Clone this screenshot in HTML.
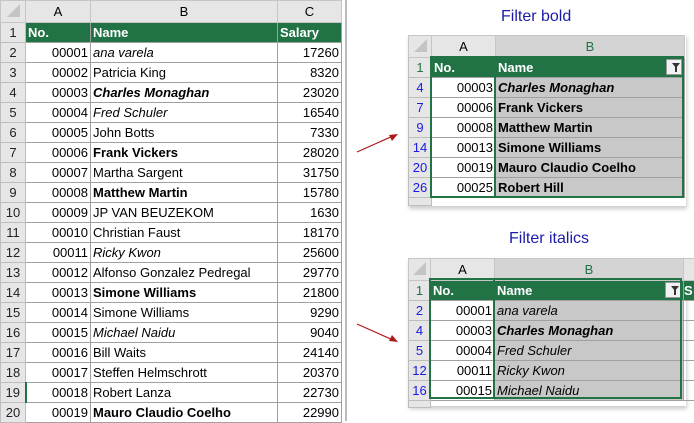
<!DOCTYPE html>
<html><head><meta charset="utf-8"><style>
*{margin:0;padding:0;box-sizing:border-box}
body{width:694px;height:421px;background:#fff;position:relative;overflow:hidden;font-family:"Liberation Sans",sans-serif;font-size:13px;color:#000}
table{border-collapse:collapse;table-layout:fixed;position:absolute}
td{border:1px solid #a0a0a0;height:20px;padding:0 2px;white-space:nowrap;overflow:hidden;line-height:18px}
td.h{background:#e6e6e6;text-align:center;border-color:#bdbdbd;color:#222}
tr.top td{height:20px;background:#e6e6e6;text-align:center;border-color:#c6c6c6}
tr.g td:not(.h){background:#217346;color:#fff;font-weight:bold}
td.r{text-align:right}
.b{font-weight:bold}.i{font-style:italic}
.bl{color:#1a1ae0 !important}
.sel{background:#c8c8c8}
.t{position:absolute;color:#1c1ca8;font-size:16px}
.box{position:absolute;border:2px solid #217346}
.corner{width:0;height:0;border-left:13px solid transparent;border-bottom:13px solid #c4c4c4;display:inline-block;margin-top:3px}
.fb{position:absolute;width:16px;height:16px;background:#f2f2f2;border:1px solid #999}
.fb:after{content:"";position:absolute;left:5px;top:3px;border-left:4px solid transparent;border-right:4px solid transparent;border-top:5px solid #333}
.fb:before{content:"";position:absolute;left:8px;top:7px;width:2px;height:5px;background:#333}
</style></head><body>

<table style="left:0;top:0;width:341px">
<colgroup><col style="width:25px"><col style="width:65px"><col style="width:187px"><col style="width:64px"></colgroup>
<tr class="top"><td><span class="corner"></span></td><td>A</td><td>B</td><td>C</td></tr>
<tr class="g"><td class="h">1</td><td>No.</td><td>Name</td><td>Salary</td></tr>
<tr><td class="h">2</td><td class="r">00001</td><td class="i">ana varela</td><td class="r">17260</td></tr>
<tr><td class="h">3</td><td class="r">00002</td><td>Patricia King</td><td class="r">8320</td></tr>
<tr><td class="h">4</td><td class="r">00003</td><td class="b i">Charles Monaghan</td><td class="r">23020</td></tr>
<tr><td class="h">5</td><td class="r">00004</td><td class="i">Fred Schuler</td><td class="r">16540</td></tr>
<tr><td class="h">6</td><td class="r">00005</td><td>John Botts</td><td class="r">7330</td></tr>
<tr><td class="h">7</td><td class="r">00006</td><td class="b">Frank Vickers</td><td class="r">28020</td></tr>
<tr><td class="h">8</td><td class="r">00007</td><td>Martha Sargent</td><td class="r">31750</td></tr>
<tr><td class="h">9</td><td class="r">00008</td><td class="b">Matthew Martin</td><td class="r">15780</td></tr>
<tr><td class="h">10</td><td class="r">00009</td><td>JP VAN BEUZEKOM</td><td class="r">1630</td></tr>
<tr><td class="h">11</td><td class="r">00010</td><td>Christian Faust</td><td class="r">18170</td></tr>
<tr><td class="h">12</td><td class="r">00011</td><td class="i">Ricky Kwon</td><td class="r">25600</td></tr>
<tr><td class="h">13</td><td class="r">00012</td><td>Alfonso Gonzalez Pedregal</td><td class="r">29770</td></tr>
<tr><td class="h">14</td><td class="r">00013</td><td class="b">Simone Williams</td><td class="r">21800</td></tr>
<tr><td class="h">15</td><td class="r">00014</td><td>Simone Williams</td><td class="r">9290</td></tr>
<tr><td class="h">16</td><td class="r">00015</td><td class="i">Michael Naidu</td><td class="r">9040</td></tr>
<tr><td class="h">17</td><td class="r">00016</td><td>Bill Waits</td><td class="r">24140</td></tr>
<tr><td class="h">18</td><td class="r">00017</td><td>Steffen Helmschrott</td><td class="r">20370</td></tr>
<tr><td class="h" style="border-right:2px solid #217346">19</td><td class="r">00018</td><td>Robert Lanza</td><td class="r">22730</td></tr>
<tr><td class="h">20</td><td class="r">00019</td><td class="b">Mauro Claudio Coelho</td><td class="r">22990</td></tr>
</table>
<div style="position:absolute;left:345px;top:0;width:2px;height:421px;background:#bdbdbd"></div>

<svg style="position:absolute;left:0;top:0" width="694" height="421">
<line x1="357" y1="152" x2="393" y2="136" stroke="#b01818" stroke-width="1.2"/>
<polygon points="398,134 389,135 392,141" fill="#b01818"/>
<line x1="357" y1="324" x2="393" y2="340" stroke="#b01818" stroke-width="1.2"/>
<polygon points="398,342 392,335 389,341" fill="#b01818"/>
</svg>

<div class="t" style="left:501px;top:8px">Filter bold</div>
<div style="position:absolute;left:408px;top:34px;width:278px;height:172px;background:#fff;box-shadow:1px 3px 4px #ccc"></div>
<table style="left:408px;top:35px;width:276px">
<colgroup><col style="width:23px"><col style="width:64px"><col style="width:189px"></colgroup>
<tr class="top"><td><span class="corner"></span></td><td>A</td><td style="background:#d4d4d4;color:#217346">B</td></tr>
<tr class="g"><td class="h" style="color:#217346">1</td><td>No.</td><td style="position:relative">Name<span class="fb" style="right:2px;top:1px"></span></td></tr>
<tr><td class="h bl">4</td><td class="r">00003</td><td class="sel b i">Charles Monaghan</td></tr>
<tr><td class="h bl">7</td><td class="r">00006</td><td class="sel b">Frank Vickers</td></tr>
<tr><td class="h bl">9</td><td class="r">00008</td><td class="sel b">Matthew Martin</td></tr>
<tr><td class="h bl">14</td><td class="r">00013</td><td class="sel b">Simone Williams</td></tr>
<tr><td class="h bl">20</td><td class="r">00019</td><td class="sel b">Mauro Claudio Coelho</td></tr>
<tr><td class="h bl">26</td><td class="r">00025</td><td class="sel b">Robert Hill</td></tr>
<tr><td class="h" style="height:8px"></td><td style="height:8px;border:none"></td><td style="height:8px;border:none"></td></tr>
</table>
<div class="box" style="left:430px;top:56px;width:254px;height:142px"></div>
<div class="box" style="left:494px;top:56px;width:190px;height:142px"></div>

<div class="t" style="left:509px;top:230px">Filter italics</div>
<div style="position:absolute;left:408px;top:258px;width:278px;height:148px;background:#fff;box-shadow:1px 3px 4px #ccc"></div>
<table style="left:408px;top:258px;width:286px">
<colgroup><col style="width:22px"><col style="width:64px"><col style="width:189px"><col style="width:11px"></colgroup>
<tr class="top"><td><span class="corner"></span></td><td>A</td><td style="background:#d4d4d4;color:#217346">B</td><td style="border-right:none"></td></tr>
<tr class="g"><td class="h" style="color:#217346">1</td><td>No.</td><td style="position:relative">Name<span class="fb" style="right:2px;top:1px"></span></td><td style="padding:0">S</td></tr>
<tr><td class="h bl">2</td><td class="r">00001</td><td class="sel i">ana varela</td><td></td></tr>
<tr><td class="h bl">4</td><td class="r">00003</td><td class="sel b i">Charles Monaghan</td><td></td></tr>
<tr><td class="h bl">5</td><td class="r">00004</td><td class="sel i">Fred Schuler</td><td></td></tr>
<tr><td class="h bl">12</td><td class="r">00011</td><td class="sel i">Ricky Kwon</td><td></td></tr>
<tr><td class="h bl">16</td><td class="r">00015</td><td class="sel i">Michael Naidu</td><td></td></tr>
<tr><td class="h" style="height:7px"></td><td style="height:7px;border:none"></td><td style="height:7px;border:none"></td><td style="height:7px;border:none"></td></tr>
</table>
<div class="box" style="left:429px;top:278px;width:253px;height:121px"></div>
<div class="box" style="left:493px;top:278px;width:189px;height:121px"></div>
</body></html>
